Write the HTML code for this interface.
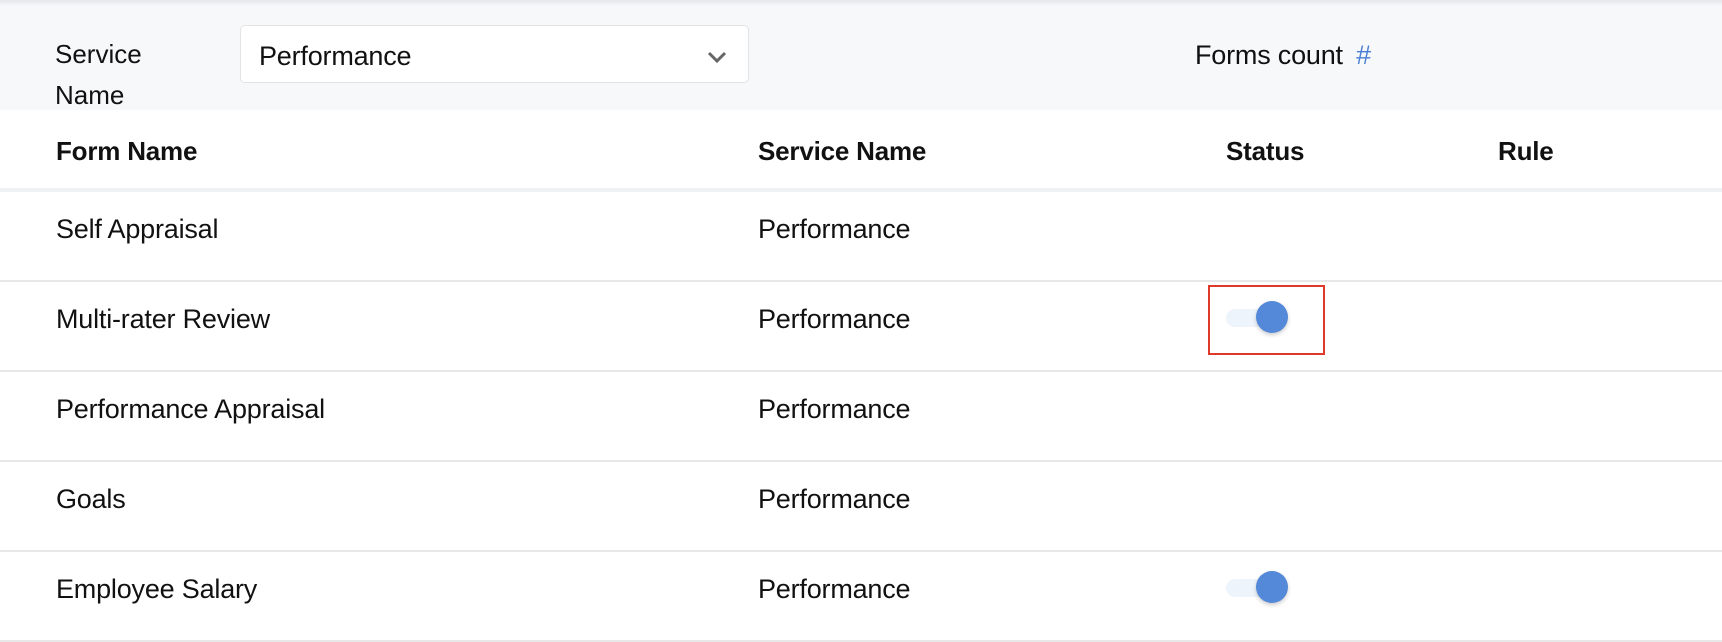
<!DOCTYPE html>
<html><head><style>
*{margin:0;padding:0;box-sizing:border-box}
body{width:1722px;height:642px;overflow:hidden;background:#fff;font-family:"Liberation Sans",sans-serif;color:#111;position:relative}
.abs{position:absolute;white-space:nowrap}
.hdr{position:absolute;left:0;top:0;width:1722px;height:110px;background:#f7f8fa}
.shadow{position:absolute;left:0;top:0;width:1722px;height:6px;background:linear-gradient(#e6e7ea,#f7f8fa)}
.t{font-size:27px;line-height:30px;letter-spacing:-0.2px}
.b{font-weight:bold;font-size:26px;line-height:30px;letter-spacing:-0.2px}
.sep{position:absolute;left:0;width:1722px;height:2px;background:#e8e8e8}
.track{position:absolute;width:50px;height:18px;border-radius:9px;background:#eef4fb}
.knob{position:absolute;width:32px;height:32px;border-radius:50%;background:#5389d8;box-shadow:0 2px 4px rgba(0,0,0,.2)}
</style></head><body>
<div class="hdr"></div><div class="shadow"></div>
<div class="abs" style="left:55px;top:39px;font-size:26px;line-height:30px">Service</div>
<div class="abs" style="left:55px;top:80px;font-size:26px;line-height:30px">Name</div>
<div class="abs" style="left:240px;top:25px;width:509px;height:58px;background:#fff;border:1px solid #e3e3e3;border-radius:5px"></div>
<div class="abs t" style="left:259px;top:41px">Performance</div>
<svg class="abs" style="left:706px;top:50px" width="22" height="14"><path d="M3 3 L11 11 L19 3" stroke="#666" stroke-width="3" fill="none"/></svg>
<div class="abs t" style="left:1195px;top:40px">Forms count <span style="color:#4a7fd4;margin-left:6px">#</span></div>
<div class="abs b" style="left:56px;top:136px">Form Name</div>
<div class="abs b" style="left:758px;top:136px">Service Name</div>
<div class="abs b" style="left:1226px;top:136px">Status</div>
<div class="abs b" style="left:1498px;top:136px">Rule</div>
<div class="sep" style="top:188px;height:4px;background:#f0f1f3"></div>
<div class="abs t" style="left:56px;top:214px">Self Appraisal</div><div class="abs t" style="left:758px;top:214px">Performance</div>
<div class="sep" style="top:280px"></div>
<div class="abs t" style="left:56px;top:304px">Multi-rater Review</div><div class="abs t" style="left:758px;top:304px">Performance</div>
<div class="abs" style="left:1208px;top:285px;width:117px;height:70px;border:2px solid #e0382a"></div>
<div class="track" style="left:1226px;top:309px"></div><div class="knob" style="left:1256px;top:301px"></div>
<div class="sep" style="top:370px"></div>
<div class="abs t" style="left:56px;top:394px">Performance Appraisal</div><div class="abs t" style="left:758px;top:394px">Performance</div>
<div class="sep" style="top:460px"></div>
<div class="abs t" style="left:56px;top:484px">Goals</div><div class="abs t" style="left:758px;top:484px">Performance</div>
<div class="sep" style="top:550px"></div>
<div class="abs t" style="left:56px;top:574px">Employee Salary</div><div class="abs t" style="left:758px;top:574px">Performance</div>
<div class="track" style="left:1226px;top:579px"></div><div class="knob" style="left:1256px;top:571px"></div>
<div class="sep" style="top:640px"></div>
</body></html>
